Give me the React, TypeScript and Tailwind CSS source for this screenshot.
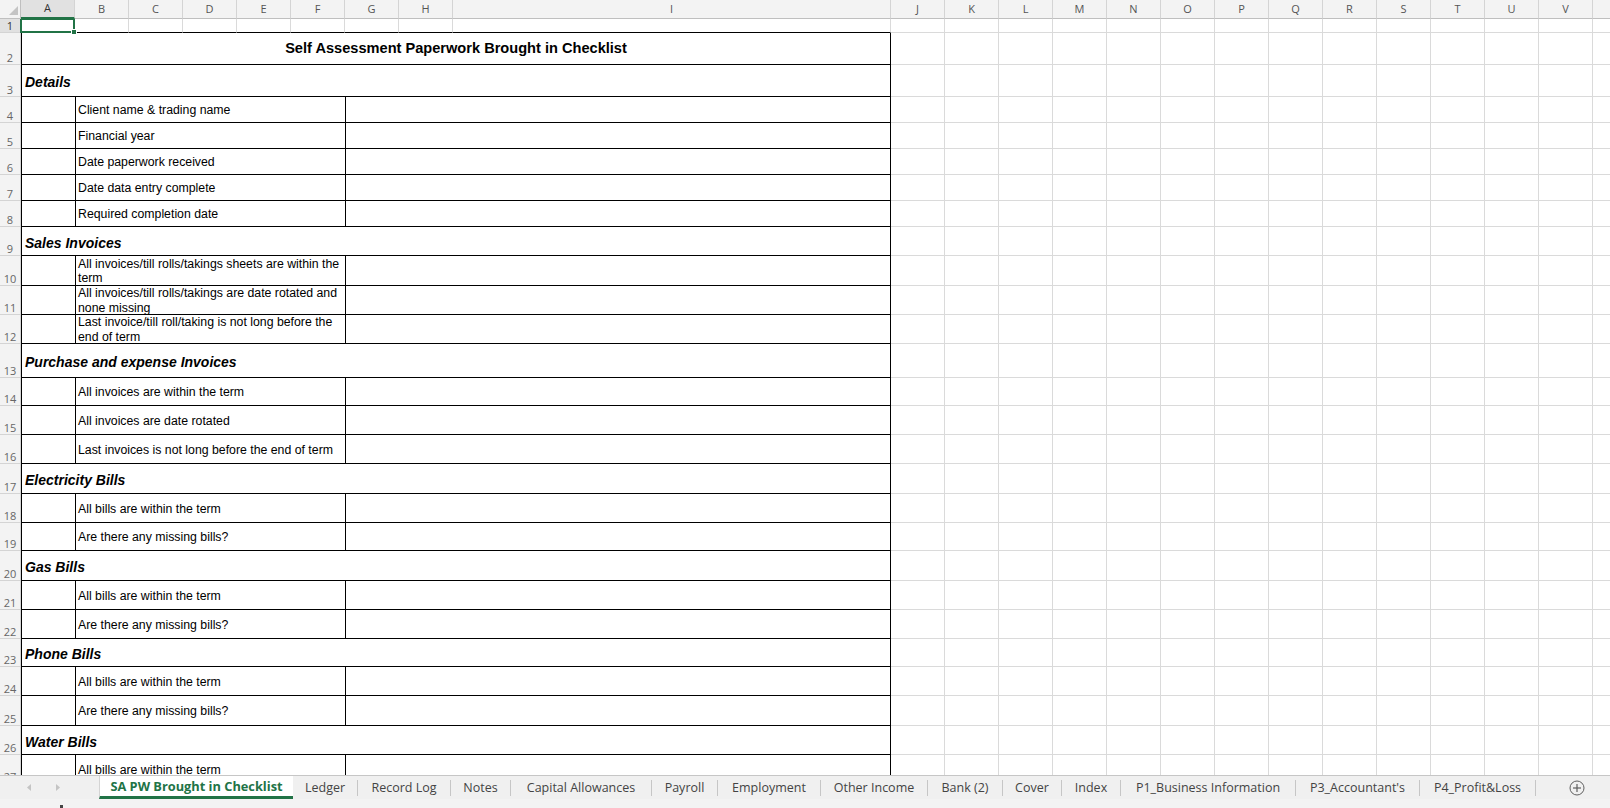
import React from 'react';

type RowKind = 'empty' | 'title' | 'heading' | 'item' | 'wrap';
interface RowDef {
  n: number;
  h: string;
  kind: RowKind;
  text?: string;
  lines?: string[];
}

const rows: RowDef[] = [
  { n: 1, h: 'h-[14px]', kind: 'empty' },
  { n: 2, h: 'h-[32px]', kind: 'title', text: 'Self Assessment Paperwork Brought in Checklist' },
  { n: 3, h: 'h-[32px]', kind: 'heading', text: 'Details' },
  { n: 4, h: 'h-[26px]', kind: 'item', text: 'Client name & trading name' },
  { n: 5, h: 'h-[26px]', kind: 'item', text: 'Financial year' },
  { n: 6, h: 'h-[26px]', kind: 'item', text: 'Date paperwork received' },
  { n: 7, h: 'h-[26px]', kind: 'item', text: 'Date data entry complete' },
  { n: 8, h: 'h-[26px]', kind: 'item', text: 'Required completion date' },
  { n: 9, h: 'h-[29px]', kind: 'heading', text: 'Sales Invoices' },
  { n: 10, h: 'h-[30px]', kind: 'wrap', lines: ['All invoices/till rolls/takings sheets are within the', 'term'] },
  { n: 11, h: 'h-[29px]', kind: 'wrap', lines: ['All invoices/till rolls/takings are date rotated and', 'none missing'] },
  { n: 12, h: 'h-[29px]', kind: 'wrap', lines: ['Last invoice/till roll/taking is not long before the', 'end of term'] },
  { n: 13, h: 'h-[34px]', kind: 'heading', text: 'Purchase and expense Invoices' },
  { n: 14, h: 'h-[28px]', kind: 'item', text: 'All invoices are within the term' },
  { n: 15, h: 'h-[29px]', kind: 'item', text: 'All invoices are date rotated' },
  { n: 16, h: 'h-[29px]', kind: 'item', text: 'Last invoices is not long before the end of term' },
  { n: 17, h: 'h-[30px]', kind: 'heading', text: 'Electricity Bills' },
  { n: 18, h: 'h-[29px]', kind: 'item', text: 'All bills are within the term' },
  { n: 19, h: 'h-[28px]', kind: 'item', text: 'Are there any missing bills?' },
  { n: 20, h: 'h-[30px]', kind: 'heading', text: 'Gas Bills' },
  { n: 21, h: 'h-[29px]', kind: 'item', text: 'All bills are within the term' },
  { n: 22, h: 'h-[29px]', kind: 'item', text: 'Are there any missing bills?' },
  { n: 23, h: 'h-[28px]', kind: 'heading', text: 'Phone Bills' },
  { n: 24, h: 'h-[29px]', kind: 'item', text: 'All bills are within the term' },
  { n: 25, h: 'h-[30px]', kind: 'item', text: 'Are there any missing bills?' },
  { n: 26, h: 'h-[29px]', kind: 'heading', text: 'Water Bills' },
  { n: 27, h: 'h-[29px]', kind: 'item', text: 'All bills are within the term' },
  { n: 28, h: 'h-[29px]', kind: 'item', text: 'Are there any missing bills?' },
];

const leftCols = ['A', 'B', 'C', 'D', 'E', 'F', 'G', 'H'];
const rightCols = ['J', 'K', 'L', 'M', 'N', 'O', 'P', 'Q', 'R', 'S', 'T', 'U', 'V'];

const tabs: { name: string; w: string }[] = [
  { name: 'Ledger', w: 'w-[65px]' },
  { name: 'Record Log', w: 'w-[93px]' },
  { name: 'Notes', w: 'w-[60px]' },
  { name: 'Capital Allowances', w: 'w-[141px]' },
  { name: 'Payroll', w: 'w-[66px]' },
  { name: 'Employment', w: 'w-[103px]' },
  { name: 'Other Income', w: 'w-[107px]' },
  { name: 'Bank (2)', w: 'w-[75px]' },
  { name: 'Cover', w: 'w-[59px]' },
  { name: 'Index', w: 'w-[59px]' },
  { name: 'P1_Business Information', w: 'w-[175px]' },
  { name: "P3_Accountant's", w: 'w-[124px]' },
  { name: 'P4_Profit&Loss', w: 'w-[116px]' },
];

function RightCells() {
  return (
    <>
      {rightCols.map((c) => (
        <div key={c} className="w-[54px] shrink-0 border-r border-b border-[#dadada]" />
      ))}
      <div className="flex-1 border-b border-[#dadada]" />
    </>
  );
}

function RowHeader({ n }: { n: number }) {
  const sel = n === 1;
  return (
    <div
      className={`w-[21px] shrink-0 flex items-end justify-center border-r border-b border-[#d4d4d4] text-[11px] leading-[13px] font-['Open_Sans',sans-serif] ${
        sel ? 'bg-[#e1e1e1] text-[#333]' : 'bg-[#f3f3f3] text-[#666]'
      }`}
    >
      {n}
    </div>
  );
}

function TableRegion({ row }: { row: RowDef }) {
  if (row.kind === 'empty') {
    return (
      <div className="w-[870px] shrink-0 flex">
        {leftCols.map((c) => (
          <div
            key={c}
            className={`w-[54px] shrink-0 border-r border-[#dadada] border-b border-b-black ${c === 'A' ? 'relative' : ''}`}
          >
            {c === 'A' && (
              <div className="absolute -left-px -top-px -right-px -bottom-px border-2 border-[#217346]">
                <div className="absolute -right-[4px] -bottom-[4px] w-[6px] h-[6px] bg-[#217346] border border-white" />
              </div>
            )}
          </div>
        ))}
        <div className="w-[438px] shrink-0 border-r border-[#dadada] border-b border-b-black" />
      </div>
    );
  }
  const base =
    "w-[870px] shrink-0 flex border-l border-r border-b border-black font-['Liberation_Sans',Arial,sans-serif] text-black";
  if (row.kind === 'title') {
    return (
      <div className={`${base} items-center justify-center pt-[1px]`}>
        <span className="text-[14.6px] font-bold">{row.text}</span>
      </div>
    );
  }
  if (row.kind === 'heading') {
    return (
      <div className={`${base} items-center pl-[3px] pt-[4px]`}>
        <span className="text-[14px] font-bold italic">{row.text}</span>
      </div>
    );
  }
  return (
    <div className={base}>
      <div className="w-[53px] shrink-0" />
      <div
        className={`w-[270px] shrink-0 border-l border-black flex items-center pl-[2px] overflow-hidden text-[12.3px] whitespace-nowrap ${
          row.kind === 'wrap' ? 'pt-[1px]' : 'pt-[2px]'
        }`}
      >
        {row.kind === 'wrap' ? (
          <div className="leading-[14.4px]">
            {row.lines!.map((l, i) => (
              <div key={i}>{l}</div>
            ))}
          </div>
        ) : (
          <span>{row.text}</span>
        )}
      </div>
      <div className="flex-1 border-l border-black" />
    </div>
  );
}

function ColumnHeaders() {
  return (
    <div className="h-[19px] shrink-0 flex bg-[#f3f3f3] font-['Open_Sans',sans-serif] text-[11px] text-[#555]">
      <div className="w-[21px] shrink-0 border-r border-b border-[#bfbfbf] relative">
        <svg width="21" height="18" className="absolute left-0 top-0">
          <polygon points="18,6 18,15 9,15" fill="#c4c4c4" />
        </svg>
      </div>
      {leftCols.map((c) => (
        <div
          key={c}
          className={`w-[54px] shrink-0 flex items-center justify-center border-r border-[#d4d4d4] ${
            c === 'A' ? 'bg-[#e1e1e1] border-b-2 border-b-[#217346] text-[#333]' : 'border-b border-b-[#bfbfbf]'
          }`}
        >
          {c}
        </div>
      ))}
      <div className="w-[438px] shrink-0 flex items-center justify-center border-r border-[#d4d4d4] border-b border-b-[#bfbfbf]">
        I
      </div>
      {rightCols.map((c) => (
        <div
          key={c}
          className="w-[54px] shrink-0 flex items-center justify-center border-r border-[#d4d4d4] border-b border-b-[#bfbfbf]"
        >
          {c}
        </div>
      ))}
      <div className="flex-1 border-b border-[#bfbfbf]" />
    </div>
  );
}

function TabBar() {
  return (
    <div className="h-[24px] shrink-0 flex border-t border-[#c6c6c6] bg-[#f0f0f0] font-['Open_Sans',sans-serif] text-[12.5px] leading-[16px] text-[#444]">
      <div className="w-[99px] shrink-0 flex items-center">
        <svg width="99" height="23" viewBox="0 0 99 23">
          <polygon points="31,8 27,11.5 31,15" fill="#c4c4c4" />
          <polygon points="56,8 60,11.5 56,15" fill="#c4c4c4" />
        </svg>
      </div>
      <div className="w-[194px] shrink-0 bg-white border-l border-[#d4d4d4] border-b-[3px] border-b-[#217346] flex items-center justify-center font-bold text-[#217346] text-[12.8px] leading-[16px] whitespace-nowrap">
        SA PW Brought in Checklist
      </div>
      {tabs.map((t) => (
        <div key={t.name} className={`${t.w} shrink-0 flex items-center`}>
          <div className="flex-1 text-center whitespace-nowrap">{t.name}</div>
          <div className="w-px h-[16px] bg-[#c6c6c6]" />
        </div>
      ))}
      <div className="ml-[33px] flex items-center">
        <svg width="16" height="16" viewBox="0 0 16 16">
          <circle cx="8" cy="8" r="7" fill="none" stroke="#606060" strokeWidth="1" />
          <line x1="8" y1="4" x2="8" y2="12" stroke="#606060" strokeWidth="1.2" />
          <line x1="4" y1="8" x2="12" y2="8" stroke="#606060" strokeWidth="1.2" />
        </svg>
      </div>
    </div>
  );
}

export default function App() {
  return (
    <div className="w-[1610px] h-[808px] flex flex-col overflow-hidden bg-white">
      <ColumnHeaders />
      <div className="flex-1 min-h-0 overflow-hidden flex flex-col">
        {rows.map((r) => (
          <div key={r.n} className={`${r.h} shrink-0 flex`}>
            <RowHeader n={r.n} />
            <TableRegion row={r} />
            <RightCells />
          </div>
        ))}
      </div>
      <TabBar />
      <div className="h-[9px] shrink-0 bg-[#f3f3f3] relative">
        <div className="absolute left-[60px] top-[6px] w-[3px] h-[3px] bg-[#444]" />
      </div>
    </div>
  );
}
